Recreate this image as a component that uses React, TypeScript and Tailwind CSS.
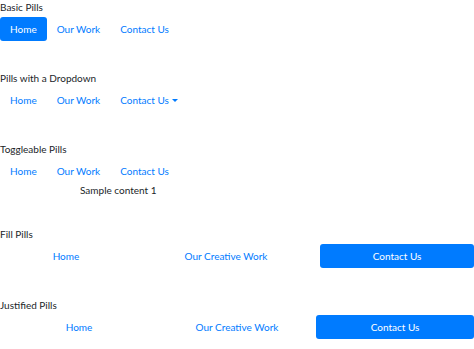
const font = { fontFamily: "Lato, 'Noto Sans', sans-serif" };

function Heading({ children }: { children: string }) {
  return <div className="h-[17px] text-[10px] leading-[15px] text-[#212529]">{children}</div>;
}

function Pill({ label, active, caret }: { label: string; active?: boolean; caret?: boolean }) {
  return (
    <a
      href="#"
      className={
        "flex h-6 items-center justify-center rounded-[3px] px-[10px] text-[10px] leading-[15px] " +
        (active ? "bg-[#007bff] text-white" : "text-[#007bff]")
      }
    >
      {label}
      {caret && (
        <span className="ml-[3px] inline-block h-0 w-0 border-x-[3px] border-t-[3px] border-x-transparent border-t-[#007bff]" />
      )}
    </a>
  );
}

export default function App() {
  return (
    <div className="w-[474px] bg-white" style={font}>
      <section className="mb-[30px]">
        <Heading>Basic Pills</Heading>
        <nav className="flex">
          <Pill label="Home" active />
          <Pill label="Our Work" />
          <Pill label="Contact Us" />
        </nav>
      </section>

      <section className="mb-[30px]">
        <Heading>Pills with a Dropdown</Heading>
        <nav className="flex">
          <Pill label="Home" />
          <Pill label="Our Work" />
          <Pill label="Contact Us" caret />
        </nav>
      </section>

      <section className="mb-[29px]">
        <Heading>Toggleable Pills</Heading>
        <nav className="flex">
          <Pill label="Home" />
          <Pill label="Our Work" />
          <Pill label="Contact Us" />
        </nav>
        <p className="pl-[80px] text-[10px] leading-[15px] text-[#212529]">Sample content 1</p>
      </section>

      <section className="mb-[30px]">
        <Heading>Fill Pills</Heading>
        <nav className="flex">
          <div className="flex-auto"><Pill label="Home" /></div>
          <div className="flex-auto"><Pill label="Our Creative Work" /></div>
          <div className="flex-auto"><Pill label="Contact Us" active /></div>
        </nav>
      </section>

      <section>
        <Heading>Justified Pills</Heading>
        <nav className="flex">
          <div className="flex-1"><Pill label="Home" /></div>
          <div className="flex-1"><Pill label="Our Creative Work" /></div>
          <div className="flex-1"><Pill label="Contact Us" active /></div>
        </nav>
      </section>
    </div>
  );
}
